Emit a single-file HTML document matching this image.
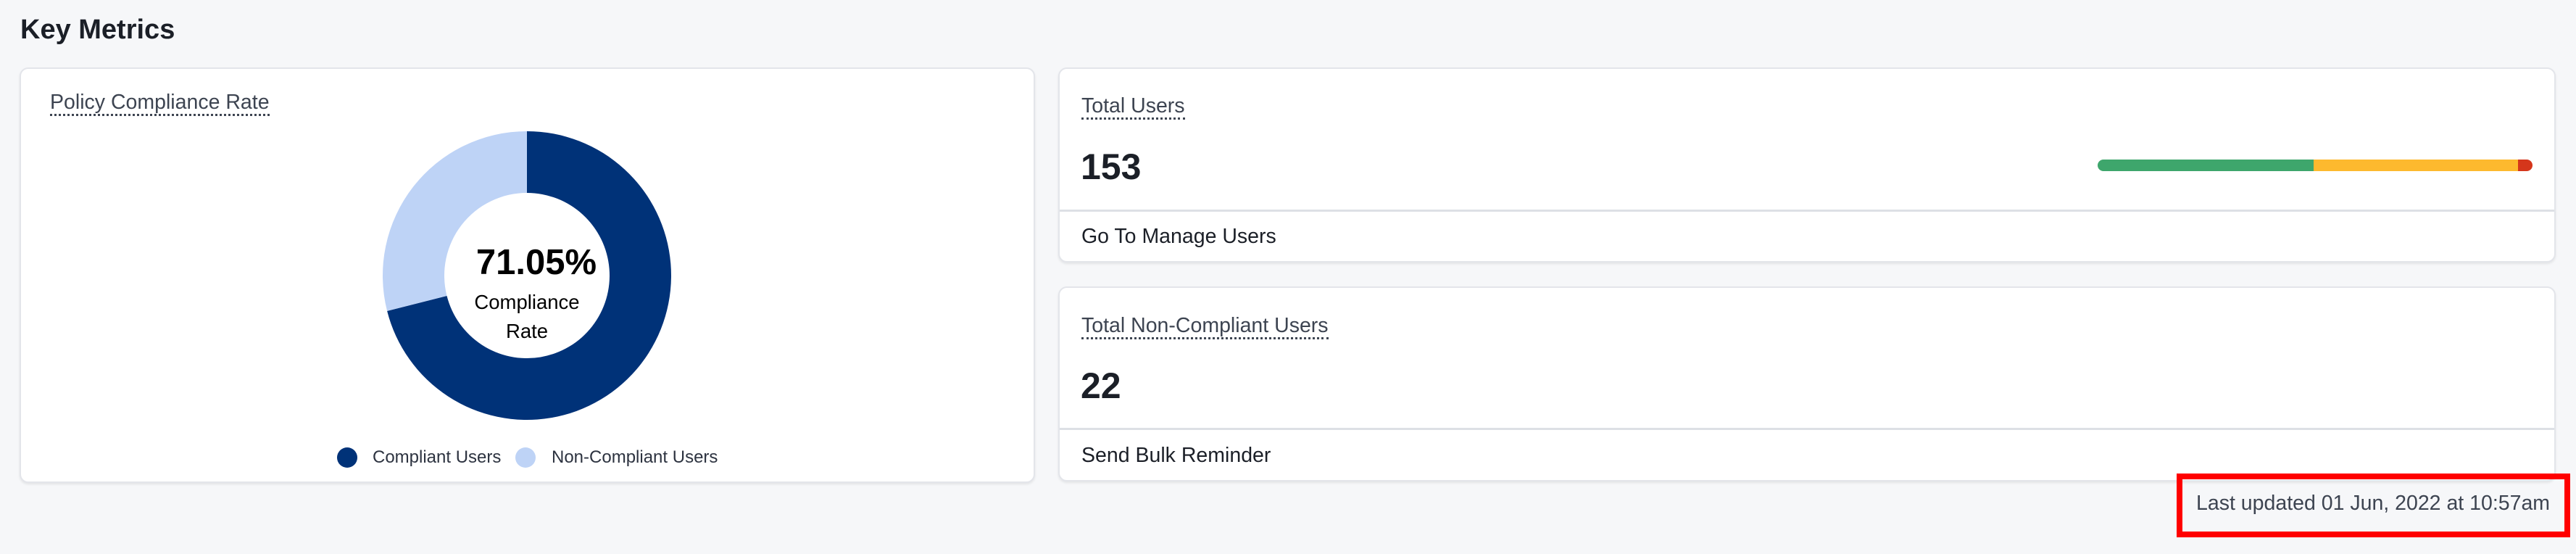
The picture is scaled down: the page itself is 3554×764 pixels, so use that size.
<!DOCTYPE html>
<html><head><meta charset="utf-8"><style>
*{margin:0;padding:0;box-sizing:border-box}
body{width:3554px;height:764px;background:#f6f7f9;font-family:"Liberation Sans",Arial,sans-serif;position:relative;overflow:hidden}
.abs{position:absolute;white-space:nowrap}
.card{position:absolute;background:#fff;border:2px solid #e3e5ea;border-radius:12px;box-shadow:0 2px 3px rgba(0,0,0,0.08)}
.lbl{font-size:28.5px;color:#3d4451;border-bottom:3px dotted #3d4451;line-height:31px}
.val{font-size:50px;font-weight:bold;color:#1b1f27}
.act{font-size:28.5px;color:#1b1f27}
.div{position:absolute;left:0;right:0;height:3px;background:#dde0e5}
</style></head><body>
<div class="abs" style="left:28px;top:20px;font-size:38px;font-weight:bold;color:#1b1f27">Key Metrics</div>

<div class="card" style="left:27px;top:93px;width:1401px;height:573px"></div>
<div class="abs lbl" style="left:69px;top:126px">Policy Compliance Rate</div>
<svg class="abs" style="left:0;top:0" width="1440" height="700">
<path d="M727 181 A199 199 0 1 1 534.1 428.9 L616.5 408 A114 114 0 1 0 727 266 Z" fill="#003278"/>
<path d="M534.1 428.9 A199 199 0 0 1 727 181 L727 266 A114 114 0 0 0 616.5 408 Z" fill="#bed3f6"/>
<circle cx="479" cy="631" r="14" fill="#003278"/>
<circle cx="725" cy="631" r="14" fill="#bed3f6"/>
</svg>
<div class="abs" style="left:640px;top:334px;width:200px;text-align:center;font-size:49px;font-weight:bold;color:#000">71.05%</div>
<div class="abs" style="left:627px;top:397px;width:200px;text-align:center;font-size:27.5px;line-height:40px;color:#000">Compliance<br>Rate</div>
<div class="abs" style="left:514px;top:617px;font-size:24px;color:#2d3340">Compliant Users</div>
<div class="abs" style="left:761px;top:617px;font-size:24px;color:#2d3340">Non-Compliant Users</div>

<div class="card" style="left:1460px;top:93px;width:2066px;height:269px">
<div class="div" style="top:194px"></div></div>
<div class="abs lbl" style="left:1492px;top:131px">Total Users</div>
<div class="abs val" style="left:1491px;top:201px">153</div>
<div style="position:absolute;left:2894px;top:220px;width:600px;height:16px;border-radius:8px;overflow:hidden;display:flex">
<div style="width:298px;background:#3ea66c"></div><div style="width:282px;background:#fdb92e"></div><div style="flex:1;background:#d5361b"></div></div>
<div class="abs act" style="left:1492px;top:310px">Go To Manage Users</div>

<div class="card" style="left:1460px;top:395px;width:2066px;height:269px">
<div class="div" style="top:193px"></div></div>
<div class="abs lbl" style="left:1492px;top:434px">Total Non-Compliant Users</div>
<div class="abs val" style="left:1491px;top:503px">22</div>
<div class="abs act" style="left:1492px;top:612px">Send Bulk Reminder</div>

<div class="abs" style="left:3003px;top:653px;width:543px;height:88px;border:8px solid #f00"></div>
<div class="abs" style="left:3030px;top:678px;font-size:28.5px;color:#3d4451">Last updated 01 Jun, 2022 at 10:57am</div>
</body></html>
